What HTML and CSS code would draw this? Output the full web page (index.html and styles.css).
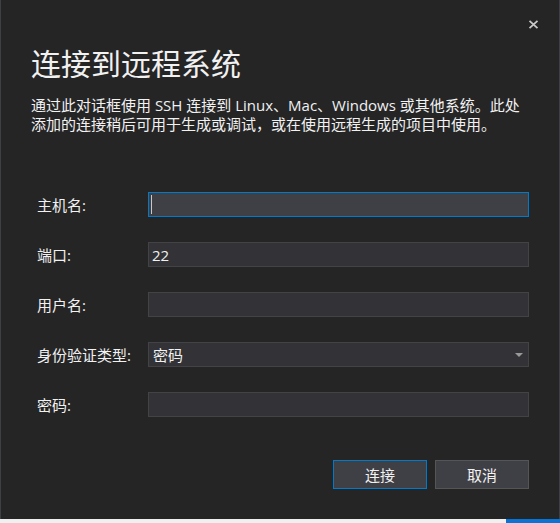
FILE: index.html
```html
<!DOCTYPE html>
<html lang="zh-CN">
<head>
  <meta charset="UTF-8">
  <meta name="viewport" content="width=device-width, initial-scale=1.0">
  <title>连接到远程系统</title>
  <link rel="stylesheet" href="styles.css">
</head>
<body>
  <div class="dialog">
    <div class="titlebar">
      <button class="close" title="关闭">
        <svg width="11" height="9" viewBox="0 0 11 9">
          <path d="M1.5 0.8 L9.5 8.2 M9.5 0.8 L1.5 8.2" stroke="#c8c8c8" stroke-width="1.8" fill="none"/>
        </svg>
      </button>
    </div>

    <h1 class="title">连接到远程系统</h1>
    <p class="desc">通过此对话框使用 SSH 连接到 Linux、Mac、Windows 或其他系统。此处<br>添加的连接稍后可用于生成或调试，或在使用远程生成的项目中使用。</p>

    <div class="form">
      <label class="label">主机名:</label>
      <div class="field focused"><span class="caret"></span></div>

      <label class="label">端口:</label>
      <div class="field">22</div>

      <label class="label">用户名:</label>
      <div class="field"></div>

      <label class="label">身份验证类型:</label>
      <div class="field select">
        <span>密码</span>
        <span class="arrow"></span>
      </div>

      <label class="label">密码:</label>
      <div class="field"></div>
    </div>

    <div class="buttons">
      <button class="btn default">连接</button>
      <button class="btn">取消</button>
    </div>
  </div>
  <div class="taskbar">
    <div class="taskbar-active"></div>
  </div>
</body>
</html>
```

FILE: styles.css
```css
body {
  margin: 0;
  width: 560px;
  height: 523px;
  background-color: #f0f0f0;
  font-family: "Open Sans", "Noto Sans CJK SC", sans-serif;
  color: #f1f1f1;
  overflow: hidden;
}

.dialog {
  box-sizing: border-box;
  width: 560px;
  height: 519px;
  padding: 0 30px;
  background-color: #252526;
  border-left: 1px solid #3f3f46;
  border-right: 1px solid #3f3f46;
}

.titlebar {
  display: flex;
  justify-content: flex-end;
  height: 49px;
  margin-right: -10px;
  box-sizing: border-box;
  padding-top: 20px;
}

.close {
  display: block;
  width: 11px;
  height: 9px;
  padding: 0;
  border: none;
  background: none;
  cursor: pointer;
}

.close svg {
  display: block;
}

.title {
  margin: 0;
  font-size: 30px;
  line-height: 30px;
  font-weight: normal;
  color: #f1f1f1;
}

.desc {
  margin: 17px 0 0;
  font-size: 15px;
  line-height: 19px;
  white-space: nowrap;
}

.form {
  display: grid;
  grid-template-columns: 111px 1fr;
  grid-auto-rows: 25px;
  row-gap: 25px;
  margin-top: 58px;
  padding-left: 6px;
}

.label {
  display: flex;
  align-items: center;
  font-size: 15px;
}

.field {
  box-sizing: border-box;
  display: flex;
  align-items: center;
  padding-left: 3px;
  font-size: 15px;
  background-color: #333337;
  border: 1px solid #434346;
}

.field.focused {
  background-color: #3f3f46;
  border-color: #007acc;
}

.caret {
  display: block;
  width: 1px;
  height: 19px;
  margin-left: -1px;
  background-color: #c8c8c8;
}

.select {
  justify-content: space-between;
  padding-left: 4px;
  padding-right: 5px;
}

.arrow {
  width: 0;
  height: 0;
  border-left: 4px solid transparent;
  border-right: 4px solid transparent;
  border-top: 4px solid #999999;
}

.buttons {
  display: flex;
  justify-content: flex-end;
  gap: 8px;
  margin-top: 43px;
}

.btn {
  width: 94px;
  height: 29px;
  padding: 0;
  font-family: inherit;
  font-size: 15px;
  color: #f1f1f1;
  background-color: #3f3f46;
  border: 1px solid #555555;
  cursor: pointer;
}

.btn.default {
  border-color: #007acc;
}

.taskbar {
  display: flex;
  justify-content: flex-end;
  height: 4px;
}

.taskbar-active {
  width: 54px;
  background-color: #0a74d6;
}
```
